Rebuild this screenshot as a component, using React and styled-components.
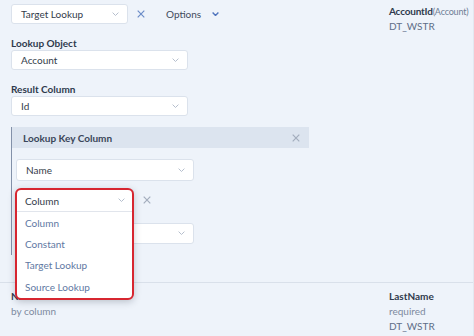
import React from "react";
import styled, { createGlobalStyle } from "styled-components";

const GlobalStyle = createGlobalStyle`
  html, body {
    margin: 0;
    padding: 0;
    background: #eef3fa;
    font-family: Lato, "Open Sans", sans-serif;
    -webkit-font-smoothing: antialiased;
  }
`;

const Page = styled.div`
  width: 474px;
  height: 336px;
  overflow: hidden;
  background: #eef3fa;
  border-right: 1px solid #e3e8f0;
  box-sizing: border-box;
`;

const Row = styled.div`
  display: grid;
  grid-template-columns: 389px 1fr;
  height: ${(p) => p.$height}px;
  border-bottom: ${(p) => (p.$divider ? "1px solid #d9e0ea" : "none")};
  box-sizing: border-box;
`;

const LeftCell = styled.div`
  padding: ${(p) => p.$top}px 0 0 11px;
  display: flex;
  flex-direction: column;
  align-items: flex-start;
`;

const RightCell = styled.div`
  padding-top: ${(p) => p.$top}px;
  display: flex;
  flex-direction: column;
`;

const Line = styled.div`
  font-size: 10px;
  line-height: 15px;
  color: ${(p) => p.$color || "#5f6e88"};
  font-weight: ${(p) => (p.$bold ? 700 : 400)};
  letter-spacing: ${(p) => (p.$tight ? "-0.2px" : "0")};
  white-space: nowrap;
`;

const Light = styled.span`
  font-weight: 400;
  color: #6f7d95;
  font-size: 9px;
`;

const TopBar = styled.div`
  display: flex;
  align-items: center;
`;

const SelectBox = styled.div`
  width: ${(p) => p.$width}px;
  height: ${(p) => p.$height || 20}px;
  box-sizing: border-box;
  background: #fff;
  border: 1px solid #dbe2ec;
  border-radius: 3px;
  display: flex;
  align-items: center;
  justify-content: space-between;
  padding: 0 8px 0 9px;
  font-size: 10px;
  color: #333c4a;
  flex-shrink: 0;
`;

const IconButton = styled.span`
  display: inline-flex;
  margin-left: ${(p) => p.$gap}px;
`;

const OptionsText = styled.span`
  margin-left: 21px;
  font-size: 10px;
  color: #3f4a5c;
`;

const Label = styled.div`
  margin-top: 12px;
  font-size: 10px;
  line-height: 14px;
  font-weight: 700;
  color: #2e3a4d;
`;

const Panel = styled.div`
  margin-top: 11px;
  width: 298px;
  border-left: 1.5px solid #8391a9;
  box-sizing: border-box;
`;

const PanelHeader = styled.div`
  height: 21px;
  background: #dce4ef;
  display: flex;
  align-items: center;
  justify-content: space-between;
  padding: 0 9px 0 11px;
  font-size: 10px;
  font-weight: 700;
  color: #3a4659;
`;

const PanelBody = styled.div`
  padding: 11px 0 11px 4px;
  display: flex;
  flex-direction: column;
  gap: 8px;
`;

const KeyRow = styled.div`
  display: flex;
  align-items: center;
  margin-bottom: ${(p) => p.$after || 0}px;
`;

const Anchor = styled.div`
  position: relative;
`;

const Dropdown = styled.div`
  position: absolute;
  top: -1px;
  left: -1px;
  width: 119px;
  box-sizing: border-box;
  background: #fff;
  border: 2px solid #d72630;
  border-radius: 6px;
  box-shadow: 0 2px 7px rgba(40, 50, 70, 0.25);
  z-index: 5;
  overflow: hidden;
`;

const DropdownHead = styled.div`
  height: 21px;
  display: flex;
  align-items: center;
  justify-content: space-between;
  padding: 0 7px 0 8px;
  font-size: 10px;
  color: #333c4a;
  border-bottom: 1px solid #e1e5ec;
`;

const Option = styled.div`
  height: 21.4px;
  display: flex;
  align-items: center;
  padding-left: 8px;
  font-size: 10px;
  color: #6078a2;
`;

const Chevron = ({ color = "#b6bfcd", w = 7, sw = 1 }) => (
  <svg width={w} height={w * 0.6} viewBox="0 0 7 4.2">
    <path d="M0.6 0.6 L3.5 3.5 L6.4 0.6" fill="none" stroke={color} strokeWidth={sw} />
  </svg>
);

const Cross = ({ color = "#9aa5b8", size = 8 }) => (
  <svg width={size} height={size} viewBox="0 0 8 8">
    <path d="M0.7 0.7 L7.3 7.3 M7.3 0.7 L0.7 7.3" stroke={color} strokeWidth="1.2" />
  </svg>
);

const Select = ({ value, width, height }) => (
  <SelectBox $width={width} $height={height}>
    <span>{value}</span>
    <Chevron />
  </SelectBox>
);

const options = ["Column", "Constant", "Target Lookup", "Source Lookup"];

export default function App() {
  return (
    <Page>
      <GlobalStyle />
      <Row $height={283} $divider>
        <LeftCell $top={4}>
          <TopBar>
            <Select value="Target Lookup" width={117} />
            <IconButton $gap={9}>
              <Cross color="#6b8cc8" />
            </IconButton>
            <OptionsText>Options</OptionsText>
            <IconButton $gap={11}>
              <Chevron color="#4f74bd" sw={1.4} />
            </IconButton>
          </TopBar>
          <Label>Lookup Object</Label>
          <Select value="Account" width={177} />
          <Label>Result Column</Label>
          <Select value="Id" width={177} />
          <Panel>
            <PanelHeader>
              <span>Lookup Key Column</span>
              <Cross color="#a3adbd" />
            </PanelHeader>
            <PanelBody>
              <Select value="Name" width={178} height={22} />
              <KeyRow $after={4}>
                <Anchor>
                  <Select value="Column" width={118} height={22} />
                  <Dropdown>
                    <DropdownHead>
                      <span>Column</span>
                      <Chevron />
                    </DropdownHead>
                    {options.map((o) => (
                      <Option key={o}>{o}</Option>
                    ))}
                  </Dropdown>
                </Anchor>
                <IconButton $gap={9}>
                  <Cross color="#a3adbd" />
                </IconButton>
              </KeyRow>
              <Select value="" width={178} height={21} />
            </PanelBody>
          </Panel>
        </LeftCell>
        <RightCell $top={4}>
          <Line $bold $tight $color="#2e3a4d">
            AccountId<Light>(Account)</Light>
          </Line>
          <Line>DT_WSTR</Line>
        </RightCell>
      </Row>
      <Row $height={53}>
        <LeftCell $top={6}>
          <Line $bold $color="#2e3a4d">Name</Line>
          <Line $color="#7d8aa0">by column</Line>
        </LeftCell>
        <RightCell $top={6}>
          <Line $bold $color="#2e3a4d">LastName</Line>
          <Line $color="#7d8aa0">required</Line>
          <Line>DT_WSTR</Line>
        </RightCell>
      </Row>
    </Page>
  );
}
